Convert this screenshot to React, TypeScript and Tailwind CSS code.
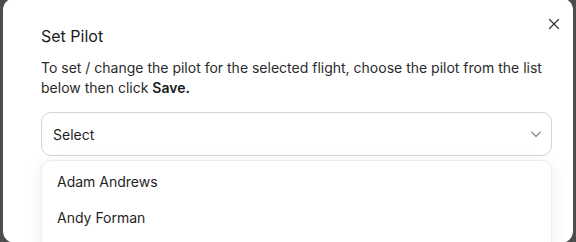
import React from "react";

export default function App() {
  return (
    <div
      className="w-[576px] h-[242px] overflow-hidden bg-[#4d4d4d] px-[3px]"
      style={{ fontFamily: "Inter, 'Noto Sans', sans-serif" }}
    >
      <div className="relative mt-[-2px] h-[245px] rounded-[12px] bg-white pl-[38px] pr-[21px] pt-[26px]">
        <button className="absolute right-[11px] top-[18px] flex h-[16px] w-[16px] items-center justify-center text-[#333]">
          <svg width="12" height="12" viewBox="0 0 12 12" fill="none" stroke="currentColor" strokeWidth="1.2" strokeLinecap="round">
            <path d="M1.5 1.5L10.5 10.5M10.5 1.5L1.5 10.5" />
          </svg>
        </button>
        <h2 className="text-[16px] leading-[24px] font-normal text-[#1a1a1a]">Set Pilot</h2>
        <p className="mt-[10px] text-[14px] leading-[20px] text-[#2b2b2b]">
          To set / change the pilot for the selected flight, choose the pilot from the list below then click <span className="font-semibold text-[#1a1a1a]">Save.</span>
        </p>
        <div className="mt-[14px] flex h-[44px] items-center justify-between rounded-[10px] border border-[#d4d4d4] pl-[11px] pr-[8px]">
          <span className="text-[14px] text-[#1f1f1f]">Select</span>
          <svg width="14" height="14" viewBox="0 0 14 14" fill="none" stroke="#8a8a8a" strokeWidth="1.1" strokeLinecap="round" strokeLinejoin="round">
            <path d="M2.5 5L7 9.5L11.5 5" />
          </svg>
        </div>
        <div className="mt-[4px] h-[100px] rounded-[10px] border border-[#ededed] bg-white py-[2px] shadow-[0_4px_16px_rgba(0,0,0,0.08)]">
          <div className="flex h-[36px] items-center px-[15px] text-[14px] text-[#1f1f1f]">Adam Andrews</div>
          <div className="flex h-[36px] items-center px-[15px] text-[14px] text-[#1f1f1f]">Andy Forman</div>
        </div>
      </div>
    </div>
  );
}
